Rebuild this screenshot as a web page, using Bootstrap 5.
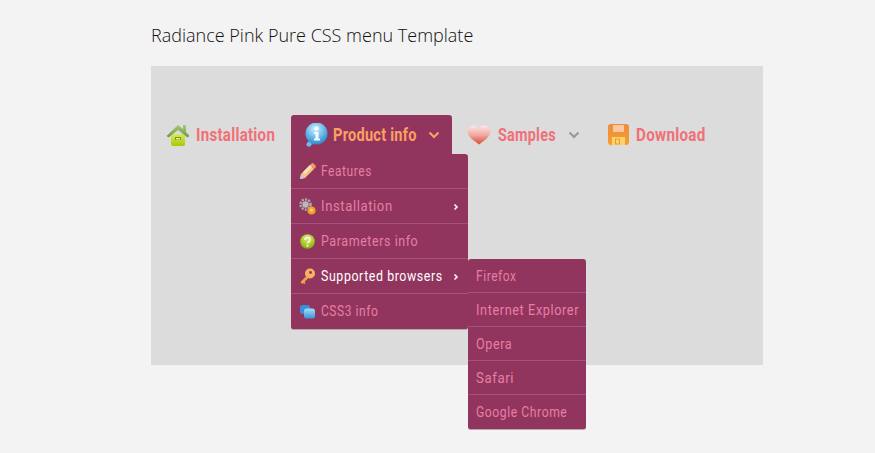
<!DOCTYPE html>
<html lang="en">
<head>
<meta charset="utf-8">
<title>Radiance Pink Pure CSS menu Template</title>
<link href="https://cdn.jsdelivr.net/npm/bootstrap@5.3.0/dist/css/bootstrap.min.css" rel="stylesheet">
<style>
html,body{height:453px;overflow:hidden}
body{background:#f3f3f3;margin:0}
.page-wrap{width:612px;margin-left:151px}
.page-title{font-family:"Open Sans",sans-serif;font-weight:300;font-size:18px;line-height:24px;color:#111;margin:0;padding:23px 0 19px}
.stage{background:#dcdcdc;height:299px;padding-top:49px}
.menu-bar{height:39px;flex-wrap:nowrap}
.menu-bar>li{position:relative}
.top-link{display:flex;align-items:center;height:39px;font-family:Roboto,sans-serif;font-weight:700;font-size:18px;letter-spacing:.3px;color:#f07078;padding:0;text-decoration:none;white-space:nowrap}
.top-link:hover,.top-link:focus{color:#f07078}
.top-link svg{flex:none}
.lbl{display:inline-block;flex:none;transform-origin:left center}
.tl-1{padding-left:15px;width:140px}
.tl-1 .lbl{margin-left:6px;width:94px;transform:scaleX(.84)}
.tl-2{background:#92355e;border-radius:3px 3px 0 0;color:#fca062;padding-left:13px;width:161px}
.tl-2:hover,.tl-2:focus{color:#fca062}
.tl-2 .lbl{margin-left:5px;width:95px;transform:scaleX(.81)}
.tl-3{padding-left:15px;width:156px}
.tl-3 .lbl{margin-left:7px;width:70px;transform:scaleX(.8)}
.tl-4{padding-left:0}
.tl-4 .lbl{margin-left:7px;transform:scaleX(.845)}
.sub-one,.sub-two{position:absolute;margin:0;padding:0;list-style:none;background:#92355e;border-bottom:1px solid #b5a8ae;border-radius:0 3px 3px 3px}
.sub-one{left:0;top:39px;width:177px}
.sub-two{left:177px;top:144px;width:118px;border-radius:3px}
.sub-one>li{position:relative;height:35px;border-bottom:1px solid #a5517a}
.sub-two>li{height:34px;border-bottom:1px solid #a5517a}
.sub-one>li:last-child,.sub-two>li:last-child{border-bottom:0}
.sub-one a,.sub-two a{display:flex;align-items:center;height:100%;font-family:Roboto,sans-serif;font-size:15px;letter-spacing:.7px;color:#e87ea4;text-decoration:none;white-space:nowrap}
.sub-one a{padding-left:8px}
.sub-two a{padding:1px 0 0 8px}
.sub-one a span,.sub-two a span{display:inline-block;transform-origin:left center;transform:scaleX(.84)}
.sub-one>li:nth-child(1) span,.sub-one>li:nth-child(5) span{transform:scaleX(.8)}
.sub-one>li:nth-child(2) span{transform:scaleX(.87)}
.sub-one>li:nth-child(3) span{transform:scaleX(.83)}
.sub-one>li:nth-child(4) span{transform:scaleX(.826)}
.sub-two>li:nth-child(1) span{transform:scaleX(.8)}
.sub-two>li:nth-child(2) span{transform:scaleX(.847)}
.sub-two>li:nth-child(4) span{transform:scaleX(.88)}
.sub-two>li:nth-child(5) span{transform:scaleX(.81)}
.sub-one svg{flex:none;margin-right:5px}
.sub-one a.on{color:#fff}
.more{position:absolute;left:162px;top:14px;width:6px;height:8px}
.sub-one svg.more{margin:0}
</style>
</head>
<body>
<div class="page-wrap">
  <h1 class="page-title">Radiance Pink Pure CSS menu Template</h1>
  <div class="stage">
    <ul class="nav menu-bar">
      <li class="nav-item">
        <a class="top-link tl-1" href="#">
          <svg width="24" height="24" viewBox="0 0 24 24"><defs><linearGradient id="h1" x1="0" y1="0" x2="0" y2="1"><stop offset="0" stop-color="#a8c878"/><stop offset="1" stop-color="#6f9a3c"/></linearGradient><linearGradient id="h2" x1="0" y1="0" x2="0" y2="1"><stop offset="0" stop-color="#d8e86a"/><stop offset="1" stop-color="#a8c800"/></linearGradient></defs><path d="M5 11h14v10a2 2 0 0 1-2 2H7a2 2 0 0 1-2-2z" fill="url(#h2)"/><path d="M0.500 13 12 2l5 4V2h3v7l3.500 4-2 1.500L12 7 2.500 14.500z" fill="url(#h1)"/><path d="M9 14h6v3H9z" fill="#7d9a10"/><path d="M10 15h4v1.500h-4z" fill="#e4ee90"/></svg>
          <span class="lbl">Installation</span>
        </a>
      </li>
      <li class="nav-item">
        <a class="top-link tl-2" href="#">
          <svg width="24" height="24" viewBox="0 0 24 24"><defs><radialGradient id="b1" cx=".45" cy=".3" r=".75"><stop offset="0" stop-color="#d4effc"/><stop offset=".6" stop-color="#5cb2e4"/><stop offset="1" stop-color="#2a7fc4"/></radialGradient></defs><path d="M5 16c0 2-1 3-2 4.500a2.200 2.200 0 0 0 3.500 2.500c1-1 2-2 4-2.500z" fill="#4fa4dc"/><circle cx="12.500" cy="10.500" r="11" fill="url(#b1)"/><circle cx="4.800" cy="21.300" r="2.300" fill="#6fbcec"/><circle cx="12.500" cy="5.500" r="2.300" fill="#f4fbff"/><path d="M10 9h4.500v6.500H16v2H10v-2h1.500V11H10z" fill="#f4fbff"/></svg>
          <span class="lbl">Product info</span>
          <svg width="12" height="8" viewBox="0 0 12 8"><path d="M1.500 1.500 6 6l4.500-4.500" fill="none" stroke="#fca062" stroke-width="2.200"/></svg>
        </a>
        <ul class="sub-one">
          <li><a href="#">
            <svg width="17" height="17" viewBox="0 0 17 17"><path d="M1 16l1-5L11 2l4 4-9 9z" fill="#f2c48c"/><path d="M11 2l1.500-1.500a1.500 1.500 0 0 1 2 0l2 2a1.500 1.500 0 0 1 0 2L15 6z" fill="#f29a5a"/><path d="M1 16l1-5 4 4z" fill="#c8c8d0"/><path d="M4 9l7-7 2 2-7 7z" fill="#fbe2bc"/></svg>
            <span>Features</span></a></li>
          <li><a href="#">
            <svg width="17" height="17" viewBox="0 0 17 17"><circle cx="6.500" cy="6.500" r="5" fill="none" stroke="#a9a9a9" stroke-width="2.500" stroke-dasharray="2 1.200"/><circle cx="6.500" cy="6.500" r="3.200" fill="#b8b8b8"/><circle cx="12.500" cy="12.500" r="4" fill="#f2a02c"/><circle cx="12.500" cy="12" r="1.500" fill="#fcd27c"/></svg>
            <span>Installation</span></a>
            <svg class="more" viewBox="0 0 6 8"><path d="M1.500 1.500 4 4 1.500 6.500" fill="none" stroke="#fff" stroke-width="1.500"/></svg></li>
          <li><a href="#">
            <svg width="17" height="17" viewBox="0 0 17 17"><defs><radialGradient id="q1" cx=".5" cy=".3" r=".8"><stop offset="0" stop-color="#dcea8a"/><stop offset=".6" stop-color="#a4c41c"/><stop offset="1" stop-color="#76a00c"/></radialGradient></defs><circle cx="8.500" cy="8.500" r="7.300" fill="url(#q1)"/><path d="M6 7c0-3.500 5-3.500 5 0 0 2-2.500 2-2.500 3.500" fill="none" stroke="#f4f8d8" stroke-width="1.700"/><circle cx="8.500" cy="12.800" r="1.100" fill="#f4f8d8"/></svg>
            <span>Parameters info</span></a></li>
          <li><a class="on" href="#">
            <svg width="17" height="17" viewBox="0 0 17 17"><circle cx="11" cy="5.500" r="5" fill="#f6b462"/><circle cx="11.500" cy="4.500" r="1.400" fill="#92355e"/><path d="M8 7.500 1.500 14l1.800 2 1-1 1 1 1.200-1.200-1-1L10 9.500z" fill="#f2a24a"/></svg>
            <span>Supported browsers</span></a>
            <svg class="more" viewBox="0 0 6 8"><path d="M1.500 1.500 4 4 1.500 6.500" fill="none" stroke="#fff" stroke-width="1.500"/></svg></li>
          <li><a href="#">
            <svg width="17" height="17" viewBox="0 0 17 17"><defs><linearGradient id="c1" x1="0" y1="0" x2="0" y2="1"><stop offset="0" stop-color="#a8dcf8"/><stop offset="1" stop-color="#3b94dc"/></linearGradient></defs><rect x="1" y="2" width="10" height="9" rx="2.500" fill="#3a8fd8"/><rect x="5" y="5.500" width="11" height="10" rx="2.500" fill="url(#c1)"/></svg>
            <span>CSS3 info</span></a></li>
        </ul>
        <ul class="sub-two">
          <li><a href="#"><span>Firefox</span></a></li>
          <li><a href="#"><span>Internet Explorer</span></a></li>
          <li><a href="#"><span>Opera</span></a></li>
          <li><a href="#"><span>Safari</span></a></li>
          <li><a href="#"><span>Google Chrome</span></a></li>
        </ul>
      </li>
      <li class="nav-item">
        <a class="top-link tl-3" href="#">
          <svg width="24" height="22" viewBox="0 0 24 22"><defs><linearGradient id="ht" x1="0" y1="0" x2="0" y2="1"><stop offset="0" stop-color="#fbe8e6"/><stop offset=".5" stop-color="#f2a8a2"/><stop offset="1" stop-color="#d94a34"/></linearGradient></defs><path d="M12 20.500C6 16 .5 12.500.5 7A5.800 5.800 0 0 1 6.300 1.500c2.500 0 4.500 1.200 5.700 3 1.200-1.800 3.200-3 5.700-3A5.800 5.800 0 0 1 23.500 7c0 5.500-5.500 9-11.500 13.500z" fill="url(#ht)"/></svg>
          <span class="lbl">Samples</span>
          <svg width="12" height="8" viewBox="0 0 12 8"><path d="M1.500 1.500 6 6l4.500-4.500" fill="none" stroke="#999" stroke-width="2.200"/></svg>
        </a>
      </li>
      <li class="nav-item">
        <a class="top-link tl-4" href="#">
          <svg width="21" height="21" viewBox="0 0 21 21"><defs><linearGradient id="d1" x1="0" y1="0" x2="0" y2="1"><stop offset="0" stop-color="#f08a3a"/><stop offset="1" stop-color="#f4a030"/></linearGradient></defs><rect width="21" height="21" rx="3" fill="url(#d1)"/><path d="M5 1h11v6a1 1 0 0 1-1 1H6a1 1 0 0 1-1-1z" fill="#f8c8a0"/><path d="M4 13h13v8H4z" fill="#fcd46c"/><rect x="7.500" y="15" width="4" height="5" fill="none" stroke="#e89a30"/></svg>
          <span class="lbl">Download</span>
        </a>
      </li>
    </ul>
  </div>
</div>
</body>
</html>
